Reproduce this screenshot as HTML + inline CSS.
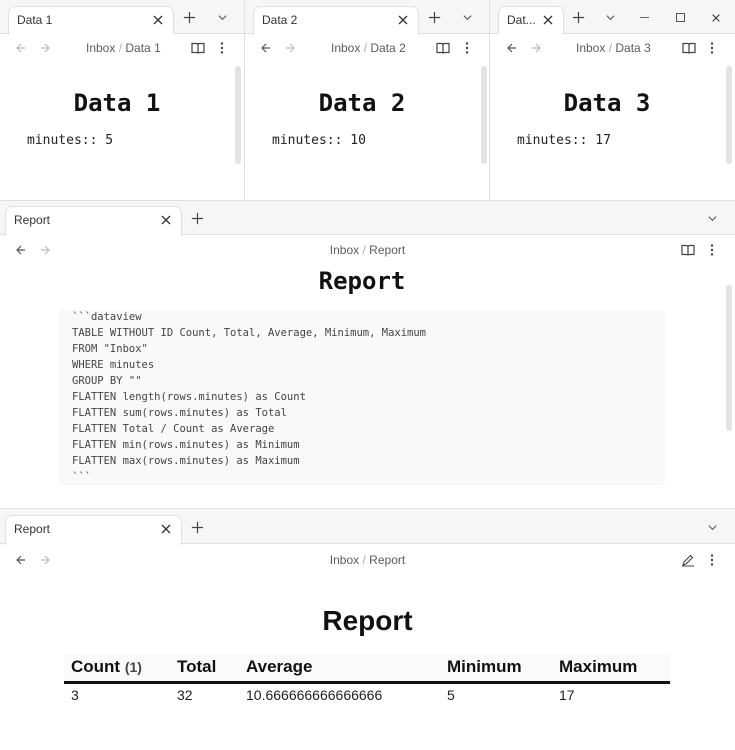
<!DOCTYPE html>
<html><head><meta charset="utf-8"><style>
*{margin:0;padding:0;box-sizing:border-box}
body{width:735px;height:750px;background:#fff;position:relative;overflow:hidden;font-family:"Liberation Sans",sans-serif;color:#222}
.a{position:absolute}
.tb{position:absolute;background:#f6f6f6;border-bottom:1px solid #e0e0e0}
.tab{position:absolute;background:#fff;border:1px solid #e0e0e0;border-bottom:none;border-radius:7px 7px 0 0;font-size:12px;color:#333;padding:6px 0 0 8px}
.tab svg{position:absolute;right:9px;top:7px}
.ic{position:absolute}
.crumb{position:absolute;font-size:12px;color:#5c5c5c;text-align:center}
.mono{font-family:"DejaVu Sans Mono","Liberation Mono",monospace}
.h1m{position:absolute;font-family:"DejaVu Sans Mono",monospace;font-weight:bold;font-size:24px;color:#111;text-align:center}
.sb{position:absolute;width:6px;background:#e3e3e3;border-radius:3px}
.vd{position:absolute;width:1px;background:#e0e0e0}
</style></head><body>
<svg width="0" height="0" style="position:absolute">
<defs>
<symbol id="x" viewBox="0 0 12 12"><path d="M2 2L10 10M10 2L2 10" stroke="#333" stroke-width="1.3" fill="none"/></symbol>
<symbol id="plus" viewBox="0 0 14 14"><path d="M7 1V13M1 7H13" stroke="#444" stroke-width="1.3" fill="none"/></symbol>
<symbol id="chev" viewBox="0 0 12 12"><path d="M2 4L6 8L10 4" stroke="#555" stroke-width="1.2" fill="none"/></symbol>
<symbol id="back" viewBox="0 0 12 12"><path d="M10 6H2M6 2L2 6L6 10" stroke="currentColor" stroke-width="1.2" fill="none"/></symbol>
<symbol id="fwd" viewBox="0 0 12 12"><path d="M2 6H10M6 2L10 6L6 10" stroke="currentColor" stroke-width="1.2" fill="none"/></symbol>
<symbol id="book" viewBox="0 0 14 14"><path d="M1 2.5H5.5Q7 2.5 7 4V12.5Q7 11.5 5.5 11.5H1ZM13 2.5H8.5Q7 2.5 7 4V12.5Q7 11.5 8.5 11.5H13Z" stroke="#444" stroke-width="1.2" fill="none"/></symbol>
<symbol id="dots" viewBox="0 0 4 14"><circle cx="2" cy="2.5" r="1.2" fill="#444"/><circle cx="2" cy="7" r="1.2" fill="#444"/><circle cx="2" cy="11.5" r="1.2" fill="#444"/></symbol>
<symbol id="pen" viewBox="0 0 14 14"><path d="M2 12L3 9L9.5 2.5L11.5 4.5L5 11ZM1 13H13" stroke="#444" stroke-width="1.1" fill="none"/></symbol>
</defs></svg>

<div class="tb" style="left:0;top:0;width:735px;height:34px"></div>
<div class="vd" style="left:244px;top:0;height:200px"></div>
<div class="vd" style="left:489px;top:0;height:200px"></div>
<div class="tab" style="left:8px;top:6px;width:166px;height:29px">Data 1<svg width="12" height="12"><use href="#x"/></svg></div>
<svg class="ic" style="left:183px;top:11px" width="13" height="13"><use href="#plus"/></svg>
<svg class="ic" style="left:217px;top:12px" width="11" height="11"><use href="#chev"/></svg>
<div class="tab" style="left:253px;top:6px;width:166px;height:29px">Data 2<svg width="12" height="12"><use href="#x"/></svg></div>
<svg class="ic" style="left:428px;top:11px" width="13" height="13"><use href="#plus"/></svg>
<svg class="ic" style="left:462px;top:12px" width="11" height="11"><use href="#chev"/></svg>
<div class="tab" style="left:498px;top:6px;width:66px;height:29px">Dat...<svg width="12" height="12"><use href="#x"/></svg></div>
<svg class="ic" style="left:572px;top:11px" width="13" height="13"><use href="#plus"/></svg>
<svg class="ic" style="left:605px;top:12px" width="11" height="11"><use href="#chev"/></svg>
<div class="a" style="left:640px;top:17px;width:9px;height:1px;background:#666"></div>
<div class="a" style="left:676px;top:13px;width:9px;height:9px;border:1px solid #555"></div>
<svg class="ic" style="left:711px;top:13px" width="10" height="10"><use href="#x"/></svg>

<svg class="ic" style="left:15px;top:42px;color:#bbb" width="12" height="12"><use href="#back"/></svg><svg class="ic" style="left:39px;top:42px;color:#bbb" width="12" height="12"><use href="#fwd"/></svg>
<div class="crumb" style="left:86px;top:41px">Inbox <span style="color:#aaa">/</span> Data 1</div>
<svg class="ic" style="left:191px;top:41px" width="14" height="14"><use href="#book"/></svg><svg class="ic" style="left:220px;top:41px" width="4" height="14"><use href="#dots"/></svg>
<svg class="ic" style="left:260px;top:42px;color:#555" width="12" height="12"><use href="#back"/></svg><svg class="ic" style="left:284px;top:42px;color:#bbb" width="12" height="12"><use href="#fwd"/></svg>
<div class="crumb" style="left:331px;top:41px">Inbox <span style="color:#aaa">/</span> Data 2</div>
<svg class="ic" style="left:436px;top:41px" width="14" height="14"><use href="#book"/></svg><svg class="ic" style="left:465px;top:41px" width="4" height="14"><use href="#dots"/></svg>
<svg class="ic" style="left:506px;top:42px;color:#555" width="12" height="12"><use href="#back"/></svg><svg class="ic" style="left:530px;top:42px;color:#bbb" width="12" height="12"><use href="#fwd"/></svg>
<div class="crumb" style="left:576px;top:41px">Inbox <span style="color:#aaa">/</span> Data 3</div>
<svg class="ic" style="left:682px;top:41px" width="14" height="14"><use href="#book"/></svg><svg class="ic" style="left:710px;top:41px" width="4" height="14"><use href="#dots"/></svg>

<div class="h1m" style="left:0;width:234px;top:89px">Data 1</div>
<div class="h1m" style="left:245px;width:234px;top:89px">Data 2</div>
<div class="h1m" style="left:490px;width:234px;top:89px">Data 3</div>
<div class="a mono" style="left:27px;top:133px;font-size:13px">minutes:: 5</div>
<div class="a mono" style="left:272px;top:133px;font-size:13px">minutes:: 10</div>
<div class="a mono" style="left:517px;top:133px;font-size:13px">minutes:: 17</div>
<div class="sb" style="left:235px;top:66px;height:98px"></div>
<div class="sb" style="left:481px;top:66px;height:98px"></div>
<div class="sb" style="left:726px;top:66px;height:98px"></div>

<div class="tb" style="left:0;top:200px;width:735px;height:35px;border-top:1px solid #e0e0e0"></div>
<div class="tab" style="left:5px;top:206px;width:177px;height:30px">Report<svg width="12" height="12"><use href="#x"/></svg></div>
<svg class="ic" style="left:191px;top:212px" width="13" height="13"><use href="#plus"/></svg>
<svg class="ic" style="left:707px;top:213px" width="11" height="11"><use href="#chev"/></svg>
<svg class="ic" style="left:15px;top:244px;color:#555" width="12" height="12"><use href="#back"/></svg><svg class="ic" style="left:39px;top:244px;color:#bbb" width="12" height="12"><use href="#fwd"/></svg>
<div class="crumb" style="left:0;width:735px;top:243px">Inbox <span style="color:#aaa">/</span> Report</div>
<svg class="ic" style="left:681px;top:243px" width="14" height="14"><use href="#book"/></svg><svg class="ic" style="left:710px;top:243px" width="4" height="14"><use href="#dots"/></svg>
<div class="h1m" style="left:0;width:724px;top:267px">Report</div>
<div class="a mono" style="left:59px;top:309px;width:606px;height:176px;background:#f9f9f9;border-radius:4px;padding:0 0 0 13px;font-size:10.5px;line-height:16px;color:#444;white-space:pre">&#96;&#96;&#96;dataview
TABLE WITHOUT ID Count, Total, Average, Minimum, Maximum
FROM "Inbox"
WHERE minutes
GROUP BY ""
FLATTEN length(rows.minutes) as Count
FLATTEN sum(rows.minutes) as Total
FLATTEN Total / Count as Average
FLATTEN min(rows.minutes) as Minimum
FLATTEN max(rows.minutes) as Maximum
&#96;&#96;&#96;</div>
<div class="sb" style="left:726px;top:285px;height:146px"></div>

<div class="tb" style="left:0;top:508px;width:735px;height:36px;border-top:1px solid #e0e0e0"></div>
<div class="tab" style="left:5px;top:515px;width:177px;height:30px">Report<svg width="12" height="12"><use href="#x"/></svg></div>
<svg class="ic" style="left:191px;top:521px" width="13" height="13"><use href="#plus"/></svg>
<svg class="ic" style="left:707px;top:522px" width="11" height="11"><use href="#chev"/></svg>
<svg class="ic" style="left:15px;top:554px;color:#555" width="12" height="12"><use href="#back"/></svg><svg class="ic" style="left:39px;top:554px;color:#bbb" width="12" height="12"><use href="#fwd"/></svg>
<div class="crumb" style="left:0;width:735px;top:553px">Inbox <span style="color:#aaa">/</span> Report</div>
<svg class="ic" style="left:681px;top:553px" width="14" height="14"><use href="#pen"/></svg><svg class="ic" style="left:710px;top:553px" width="4" height="14"><use href="#dots"/></svg>
<div class="a" style="left:0;width:735px;top:605px;text-align:center;font-size:28px;font-weight:bold;color:#111">Report</div>
<div class="a" style="left:64px;top:653px;width:606px;height:28px;background:#fafafa"></div>
<div class="a" style="left:64px;top:681px;width:606px;height:3px;background:#111"></div>
<div class="a" style="left:71px;top:657px;font-size:17px;font-weight:bold;color:#111">Count <span style="font-size:14px;color:#444">(1)</span></div>
<div class="a" style="left:177px;top:657px;font-size:17px;font-weight:bold;color:#111">Total</div>
<div class="a" style="left:246px;top:657px;font-size:17px;font-weight:bold;color:#111">Average</div>
<div class="a" style="left:447px;top:657px;font-size:17px;font-weight:bold;color:#111">Minimum</div>
<div class="a" style="left:559px;top:657px;font-size:17px;font-weight:bold;color:#111">Maximum</div>
<div class="a" style="left:71px;top:687px;font-size:14px">3</div>
<div class="a" style="left:177px;top:687px;font-size:14px">32</div>
<div class="a" style="left:246px;top:687px;font-size:14px">10.666666666666666</div>
<div class="a" style="left:447px;top:687px;font-size:14px">5</div>
<div class="a" style="left:559px;top:687px;font-size:14px">17</div>
</body></html>
